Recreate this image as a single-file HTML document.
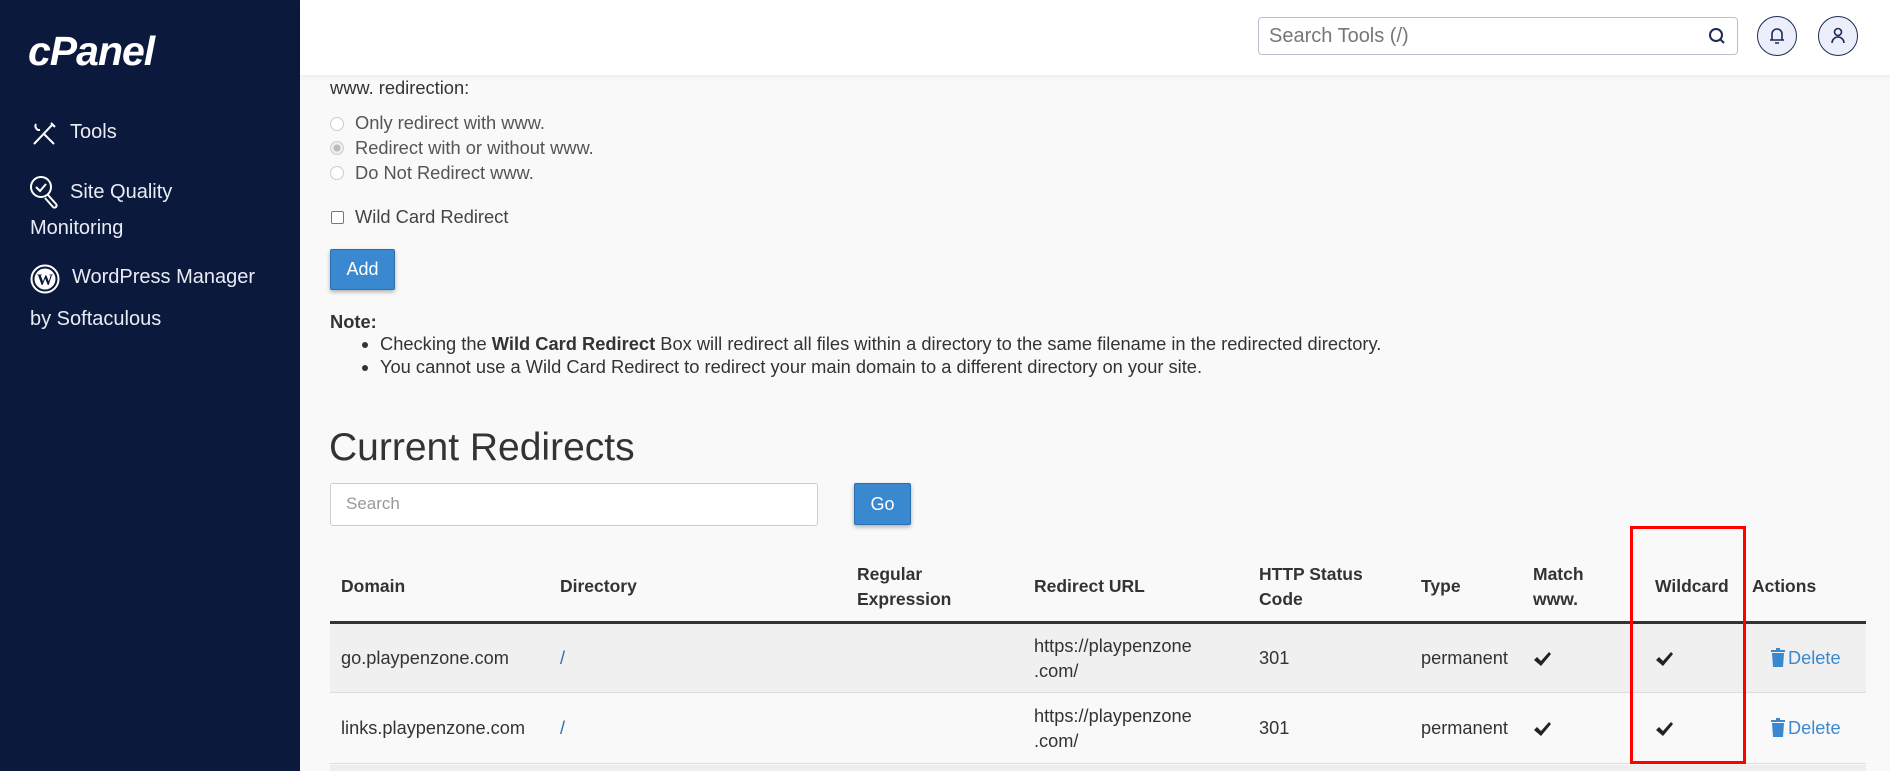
<!DOCTYPE html>
<html><head><meta charset="utf-8"><style>
*{box-sizing:border-box;margin:0;padding:0}
body{width:1890px;height:771px;overflow:hidden;background:#f9f9f9;font-family:"Liberation Sans",sans-serif;color:#333;position:relative;font-size:18.3px}
.side{position:absolute;left:0;top:0;width:300px;height:771px;background:#0b1a3c;color:#fff}
.side .it{position:absolute;left:30px;font-size:20px;color:#e8ecf4}
.hdr{position:absolute;left:300px;top:0;right:0;height:75px;background:#fff;box-shadow:0 2px 4px rgba(0,0,0,.06)}
.abs{position:absolute}
.radio{position:absolute;left:330px;width:14px;height:14px;border:1px solid #ccc;border-radius:50%;background:#fff}
.btn{position:absolute;background:#3a89d0;color:#fff;border:1px solid #2a6fb0;border-radius:2px;box-shadow:0 2px 4px rgba(0,0,0,.3);text-align:center;font-size:18px}
.th{position:absolute;font-weight:bold;font-size:17.5px;color:#333;line-height:25px}
.td{position:absolute;font-size:18.2px;color:#333;line-height:25px}
.ck{position:absolute;width:18px;height:16px}
</style></head><body>
<div class="side">
 <div class="abs" style="left:28px;top:28px;font-size:41px;font-weight:bold;font-style:italic;letter-spacing:-1px;color:#fff">cPanel</div>
 <svg class="abs" style="left:31px;top:121px" width="26" height="26" viewBox="0 0 26 26" fill="none" stroke="#fff" stroke-width="2"><path d="M3 23L21 4M20 2l4 4M23 23L12 12M5 3a4 4 0 0 0 4 6"/></svg>
 <div class="it" style="top:121px;left:70px">Tools</div>
 <svg class="abs" style="left:29px;top:175px" width="32" height="34" viewBox="0 0 32 34" fill="none" stroke="#fff" stroke-width="2"><circle cx="12" cy="12" r="10"/><path d="M7 12l4 4 6-7M19 20l8 9a2 2 0 0 1-3 3l-8-9"/></svg>
 <div class="it" style="top:181px;left:70px">Site Quality</div>
 <div class="it" style="top:217px">Monitoring</div>
 <svg class="abs" style="left:30px;top:264px" width="30" height="30" viewBox="0 0 30 30"><circle cx="15" cy="15" r="13.5" fill="none" stroke="#fff" stroke-width="2"/><circle cx="15" cy="15" r="10.5" fill="#fff"/><text x="15" y="21" font-size="16" font-weight="bold" text-anchor="middle" fill="#0b1a3c" font-family="Liberation Serif">W</text></svg>
 <div class="it" style="top:266px;left:72px">WordPress Manager</div>
 <div class="it" style="top:308px">by Softaculous</div>
</div>
<div class="hdr">
 <div class="abs" style="left:958px;top:17px;width:480px;height:38px;border:1px solid #b8c0d0;border-radius:4px;font-size:20px;color:#777;padding:7px 10px">Search Tools (/)</div>
 <svg class="abs" style="left:1408px;top:27px" width="18" height="18" viewBox="0 0 18 18" fill="none" stroke="#1d2b52" stroke-width="2"><circle cx="8" cy="8" r="6"/><path d="M12 12l4 4"/></svg>
 <div class="abs" style="left:1457px;top:16px;width:40px;height:40px;border:1px solid #1d2b52;border-radius:50%;background:#eceffb"></div>
 <svg class="abs" style="left:1468px;top:26px" width="18" height="20" viewBox="0 0 18 20" fill="none" stroke="#1d2b52" stroke-width="1.6"><path d="M4 14V8a5 5 0 0 1 10 0v6M2 14h14M7 17h4"/></svg>
 <div class="abs" style="left:1518px;top:16px;width:40px;height:40px;border:1px solid #1d2b52;border-radius:50%;background:#eceffb"></div>
 <svg class="abs" style="left:1529px;top:26px" width="18" height="20" viewBox="0 0 18 20" fill="none" stroke="#1d2b52" stroke-width="1.6"><circle cx="9" cy="6" r="3.5"/><path d="M3 17a6 6 0 0 1 12 0"/></svg>
</div>
<div class="abs" style="left:330px;top:77px">www. redirection:</div>
<div class="radio" style="top:117px"></div><div class="abs" style="left:355px;top:112px;color:#555">Only redirect with www.</div>
<div class="radio" style="top:141px;background:radial-gradient(circle,#bbb 3px,#eee 4px)"></div><div class="abs" style="left:355px;top:137px;color:#555">Redirect with or without www.</div>
<div class="radio" style="top:166px"></div><div class="abs" style="left:355px;top:162px;color:#555">Do Not Redirect www.</div>
<div class="abs" style="left:331px;top:211px;width:13px;height:13px;border:1px solid #777;border-radius:2px;background:#fff"></div>
<div class="abs" style="left:355px;top:206px;color:#444">Wild Card Redirect</div>
<div class="btn" style="left:330px;top:249px;width:65px;height:41px;line-height:39px">Add</div>
<div class="abs" style="left:330px;top:311px;font-weight:bold">Note:</div>
<ul class="abs" style="left:380px;top:332px;line-height:23px;color:#333;white-space:nowrap">
<li>Checking the <b>Wild Card Redirect</b> Box will redirect all files within a directory to the same filename in the redirected directory.</li>
<li>You cannot use a Wild Card Redirect to redirect your main domain to a different directory on your site.</li></ul>
<div class="abs" style="left:329px;top:426px;font-size:39px;color:#333">Current Redirects</div>
<div class="abs" style="left:330px;top:483px;width:488px;height:43px;border:1px solid #ccc;border-radius:3px;background:#fff;color:#999;padding:10px 15px;font-size:17px">Search</div>
<div class="btn" style="left:854px;top:483px;width:57px;height:42px;line-height:40px">Go</div>
<div class="th" style="left:341px;top:574px">Domain</div>
<div class="th" style="left:560px;top:574px">Directory</div>
<div class="th" style="left:857px;top:562px">Regular<br>Expression</div>
<div class="th" style="left:1034px;top:574px">Redirect URL</div>
<div class="th" style="left:1259px;top:562px">HTTP Status<br>Code</div>
<div class="th" style="left:1421px;top:574px">Type</div>
<div class="th" style="left:1533px;top:562px">Match<br>www.</div>
<div class="th" style="left:1655px;top:574px">Wildcard</div>
<div class="th" style="left:1752px;top:574px">Actions</div>
<div class="abs" style="left:330px;top:621px;width:1536px;height:3px;background:#333"></div>
<div class="abs" style="left:330px;top:624px;width:1536px;height:69px;background:#f0f0f0;border-bottom:1px solid #ddd"></div>
<div class="abs" style="left:330px;top:694px;width:1536px;height:70px;background:#f9f9f9;border-bottom:1px solid #ddd"></div>
<div class="abs" style="left:330px;top:765px;width:1536px;height:6px;background:#eee"></div>

<div class="td" style="left:341px;top:646px">go.playpenzone.com</div>
<div class="td" style="left:560px;top:646px;color:#2a6fb0">/</div>
<div class="td" style="left:1034px;top:634px">https://playpenzone<br>.com/</div>
<div class="td" style="left:1259px;top:646px">301</div>
<div class="td" style="left:1421px;top:646px">permanent</div>
<svg class="ck" style="left:1533px;top:651px" viewBox="0 0 18 16"><path d="M1 9l3-3 4 4 8-9 2 2-10 12z" fill="#222"/></svg>
<svg class="ck" style="left:1655px;top:651px" viewBox="0 0 18 16"><path d="M1 9l3-3 4 4 8-9 2 2-10 12z" fill="#222"/></svg>
<svg class="abs" style="left:1771px;top:648px" width="14" height="19" viewBox="0 0 14 19" fill="#3a89d0"><rect x="0" y="2" width="14" height="2"/><rect x="5" y="0" width="4" height="2"/><path d="M1 5h12l-1 14H2z"/></svg>
<div class="td" style="left:1788px;top:646px;color:#3a89d0">Delete</div>

<div class="td" style="left:341px;top:716px">links.playpenzone.com</div>
<div class="td" style="left:560px;top:716px;color:#2a6fb0">/</div>
<div class="td" style="left:1034px;top:704px">https://playpenzone<br>.com/</div>
<div class="td" style="left:1259px;top:716px">301</div>
<div class="td" style="left:1421px;top:716px">permanent</div>
<svg class="ck" style="left:1533px;top:721px" viewBox="0 0 18 16"><path d="M1 9l3-3 4 4 8-9 2 2-10 12z" fill="#222"/></svg>
<svg class="ck" style="left:1655px;top:721px" viewBox="0 0 18 16"><path d="M1 9l3-3 4 4 8-9 2 2-10 12z" fill="#222"/></svg>
<svg class="abs" style="left:1771px;top:718px" width="14" height="19" viewBox="0 0 14 19" fill="#3a89d0"><rect x="0" y="2" width="14" height="2"/><rect x="5" y="0" width="4" height="2"/><path d="M1 5h12l-1 14H2z"/></svg>
<div class="td" style="left:1788px;top:716px;color:#3a89d0">Delete</div>
<div class="abs" style="left:1630px;top:526px;width:116px;height:238px;border:3px solid #f00"></div>
</body></html>
